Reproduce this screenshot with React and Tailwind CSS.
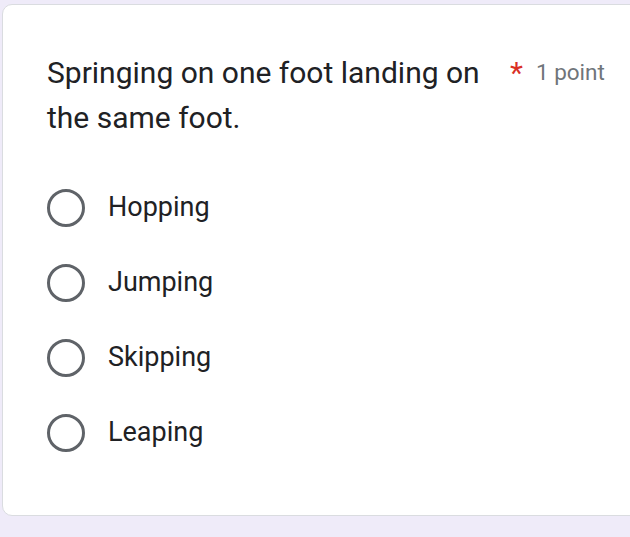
const options = ["Hopping", "Jumping", "Skipping", "Leaping"];

function Radio() {
  return <div className="h-[38px] w-[38px] shrink-0 rounded-full border-[3.5px] border-[#5f6368]" />;
}

export default function App() {
  return (
    <div className="h-[537px] w-[630px] overflow-hidden bg-[#efebf9] pt-[4px] pl-[2px] font-['Roboto',sans-serif]">
      <div className="w-[650px] rounded-[10px] border border-[#dadce0] bg-white pl-[44px] pt-[45px] pb-[45px]">
        {/* Question header */}
        <div className="flex items-start">
          <h2 className="w-[450px] text-[30px] leading-[45px] font-normal text-[#202124]">
            Springing on one foot landing on the same foot.
          </h2>
          <span className="ml-[13px] text-[30px] leading-[45px] text-[#d93025]">*</span>
          <span className="ml-[13px] text-[22.5px] leading-[45px] text-[#70757a]">1 point</span>
        </div>

        {/* Choices */}
        <div className="mt-[30px] flex flex-col">
          {options.map((opt) => (
            <label key={opt} className="flex h-[75px] items-center gap-[23px]">
              <Radio />
              <span className="text-[27px] text-[#202124]">{opt}</span>
            </label>
          ))}
        </div>
      </div>
    </div>
  );
}
